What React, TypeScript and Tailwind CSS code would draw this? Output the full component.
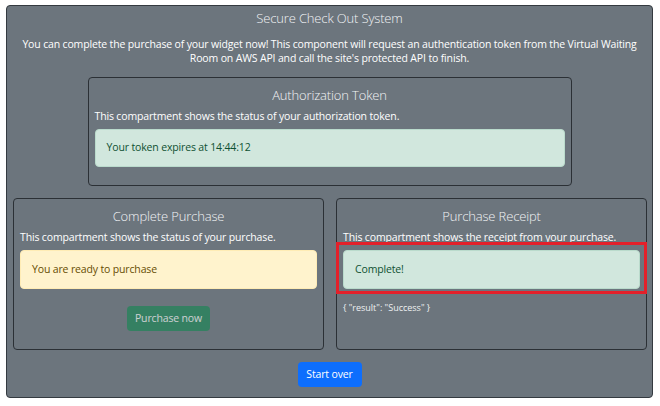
import React from "react";

const font = { fontFamily: '"Open Sans", "Noto Sans", sans-serif' };

const Compartment = ({
  title,
  note,
  children,
  className = "",
}: {
  title: string;
  note: string;
  children?: React.ReactNode;
  className?: string;
}) => (
  <div className={`border border-[#2b3035] rounded-[4px] px-[6px] ${className}`}>
    <h2 className="text-center text-[13px] tracking-[-0.15px] font-light text-[#f1f3f5] leading-[20px] mt-[7px]">
      {title}
    </h2>
    <p className="text-[10.5px] tracking-[-0.15px] text-white leading-[14px] mt-[4px]">{note}</p>
    {children}
  </div>
);

export default function App() {
  return (
    <div className="w-[660px] h-[406px] bg-white pt-[5px] pl-[6px]" style={font}>
      <div className="w-[647px] h-[393px] bg-[#6c757d] border border-[#343a40] rounded-[4px] flex flex-col items-center">
        <h1 className="text-[13px] tracking-[-0.15px] font-light text-[#f1f3f5] leading-[20px] mt-[2px]">
          Secure Check Out System
        </h1>
        <p className="text-[10.5px] tracking-[-0.15px] text-white text-center leading-[14px] mt-[9px] px-[6px]">
          You can complete the purchase of your widget now! This component will request an
          authentication token from the Virtual Waiting Room on AWS API and call the site's
          protected API to finish.
        </p>

        {/* token status */}
        <Compartment
          title="Authorization Token"
          note="This compartment shows the status of your authorization token."
          className="w-[484px] h-[109px] mt-[12px]"
        >
          <div className="mt-[6px] h-[38px] rounded-[4px] bg-[#d1e7dd] border border-[#badbcc] flex items-center px-[11px] text-[10.5px] tracking-[-0.15px] text-[#0f5132]">
            Your token expires at 14:44:12
          </div>
        </Compartment>

        <div className="flex gap-[12px] mt-[12px] w-full pl-[6px] pr-[5px]">
          <Compartment
            title="Complete Purchase"
            note="This compartment shows the status of your purchase."
            className="flex-1 h-[152px]"
          >
            <div className="mt-[6px] h-[39px] rounded-[4px] bg-[#fff3cd] border border-[#ffecb5] flex items-center px-[11px] text-[10.5px] tracking-[-0.15px] text-[#664d03]">
              You are ready to purchase
            </div>
            <div className="flex justify-center mt-[17px]">
              <button className="h-[25px] w-[83px] rounded-[4px] bg-[#198754] opacity-65 text-white text-[10.5px] tracking-[-0.15px]">
                Purchase now
              </button>
            </div>
          </Compartment>

          <Compartment
            title="Purchase Receipt"
            note="This compartment shows the receipt from your purchase."
            className="flex-1 h-[152px]"
          >
            <div className="relative mt-[6px]">
              <div className="h-[39px] rounded-[4px] bg-[#d1e7dd] border border-[#badbcc] flex items-center px-[11px] text-[10.5px] tracking-[-0.15px] text-[#0f5132]">
                Complete!
              </div>
              {/* highlight frame */}
              <div className="absolute -left-[7px] -right-[7px] -top-[8px] -bottom-[5px] border-[3px] border-[#e3202a]" />
            </div>
            <pre className="mt-[12px] text-[9px] text-[#eef0f2]" style={font}>
              {'{ "result": "Success" }'}
            </pre>
          </Compartment>
        </div>

        <button className="mt-[12px] h-[25px] w-[64px] rounded-[4px] bg-[#0d6efd] text-white text-[10.5px] tracking-[-0.15px]">
          Start over
        </button>
      </div>
    </div>
  );
}
